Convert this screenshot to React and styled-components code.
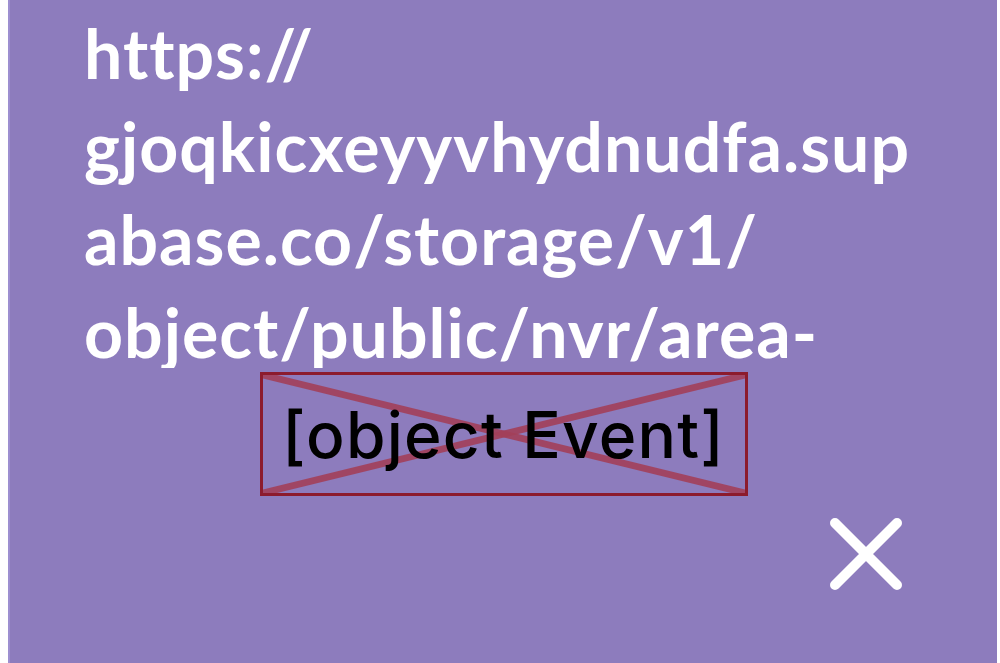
import React from "react";
import styled, { createGlobalStyle } from "styled-components";

const url =
  "https://gjoqkicxeyyvhydnudfa.supabase.co/storage/v1/object/public/nvr/area-";

const lines = [
  "https://",
  "gjoqkicxeyyvhydnudfa.sup",
  "abase.co/storage/v1/",
  "object/public/nvr/area-",
  "snapshot.jpg",
];

export default function App() {
  return (
    <>
      <GlobalStyle />
      <Page>
        <Panel>
          <UrlText title={url}>
            {lines.map((line) => (
              <Line key={line}>{line}</Line>
            ))}
          </UrlText>
          <BrokenImage>
            <Cross viewBox="0 0 488 124" preserveAspectRatio="none">
              <line x1="0" y1="0" x2="488" y2="124" />
              <line x1="488" y1="0" x2="0" y2="124" />
            </Cross>
            <AltText>[object Event]</AltText>
          </BrokenImage>
          <CloseRow>
            <CloseButton aria-label="close">
              <svg width="72" height="72" viewBox="0 0 72 72">
                <path
                  d="M5 5 L67 67 M67 5 L5 67"
                  stroke="#fff"
                  strokeWidth="10"
                  strokeLinecap="round"
                  fill="none"
                />
              </svg>
            </CloseButton>
          </CloseRow>
        </Panel>
      </Page>
    </>
  );
}

const GlobalStyle = createGlobalStyle`
  html, body {
    margin: 0;
    padding: 0;
    background: #ffffff;
    overflow: hidden;
  }
`;

const Page = styled.div`
  height: 100vh;
  padding: 0 3px 0 8px;
  box-sizing: border-box;
  background: #ffffff;
`;

const Panel = styled.div`
  height: 100%;
  background: #8d7cbd;
  border-left: 2px solid #9d8fd0;
  box-sizing: border-box;
  display: flex;
  flex-direction: column;
`;

const UrlText = styled.div`
  margin: 6px 0 0 74px;
  height: 362px;
  overflow: hidden;
  color: #ffffff;
  font-family: "Lato", "Open Sans", sans-serif;
  font-weight: 700;
  font-size: 68px;
  line-height: 93px;
  letter-spacing: 1px;
`;

const Line = styled.span`
  display: block;
  white-space: nowrap;
`;

const BrokenImage = styled.div`
  position: relative;
  align-self: center;
  margin-top: 4px;
  width: 488px;
  height: 124px;
  box-sizing: border-box;
  border: 3px solid #8c1b2d;
  display: flex;
  align-items: center;
  justify-content: center;
`;

const Cross = styled.svg`
  position: absolute;
  inset: 0;
  width: 100%;
  height: 100%;
  line {
    stroke: #a3405a;
    stroke-width: 7;
    opacity: 0.9;
  }
`;

const AltText = styled.span`
  position: relative;
  color: #000000;
  font-family: "Inter", "Liberation Sans", sans-serif;
  font-size: 64px;
  font-weight: 500;
  letter-spacing: 1.2px;
`;

const CloseRow = styled.div`
  display: flex;
  justify-content: flex-end;
  padding: 22px 95px 0 0;
`;

const CloseButton = styled.button`
  background: none;
  border: none;
  padding: 0;
  cursor: pointer;
  display: flex;
`;
